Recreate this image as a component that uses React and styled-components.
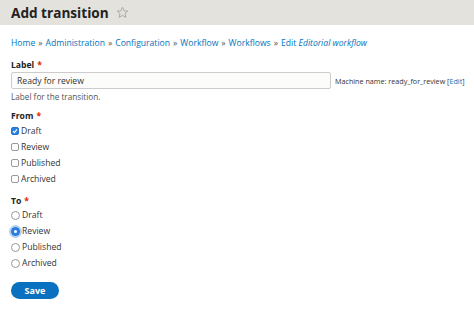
import * as React from 'react';
import styled, { createGlobalStyle } from 'styled-components';

const Global = createGlobalStyle`
  html, body { margin: 0; padding: 0; background: #fff; }
  body { font-family: "Open Sans", "DejaVu Sans", sans-serif; color: #333; }
`;

const Header = styled.div`
  height: 25px;
  background: #e3e2dc;
  display: flex;
  align-items: center;
  padding: 0 11px;
  gap: 7px;
`;

const Title = styled.h1`
  margin: 0;
  font-size: 13.6px;
  line-height: 16px;
  font-weight: 700;
  color: #222;
`;

const Star = styled.svg`
  width: 13px;
  height: 13px;
`;

const Body = styled.div`
  padding: 12px 11px 0;
  font-size: 8.5px;
  line-height: 12px;
`;

const Breadcrumb = styled.div`
  color: #0074bd;
  font-size: 8.6px;
  margin-bottom: 10px;
  white-space: nowrap;
  em { font-style: italic; }
`;

const Sep = styled.span`
  color: #555;
  margin: 0 3px;
`;

const FieldLabel = styled.div`
  font-weight: 700;
  font-size: 8.6px;
  color: #222;
  margin-bottom: ${p => p.$gap || 1}px;
  span { color: #e32700; margin-left: 3px; }
`;

const InputRow = styled.div`
  display: flex;
  align-items: center;
  gap: 4px;
`;

const TextInput = styled.div`
  flex-shrink: 0;
  width: 308px;
  height: 15px;
  border: 1px solid #ccc;
  border-radius: 2px;
  background: #fcfcfa;
  display: flex;
  align-items: center;
  padding: 0 5px;
  font-size: 8.6px;
  color: #333;
`;

const Machine = styled.div`
  font-size: 7.2px;
  color: #333;
  white-space: nowrap;
  a { color: #0074bd; }
`;

const Desc = styled.div`
  font-size: 8.2px;
  color: #555;
  margin: 2px 0 7px;
`;

const Options = styled.div`
  display: flex;
  flex-direction: column;
  gap: 4px;
  margin-bottom: ${p => p.$mb || 0}px;
`;

const Option = styled.div`
  display: flex;
  align-items: center;
  gap: 2px;
  height: 12px;
  font-size: 8.6px;
  color: #333;
`;

const Box = styled.span`
  width: ${p => (p.$round ? 9 : 8)}px;
  height: ${p => (p.$round ? 9 : 8)}px;
  border: 1px solid ${p => (p.$on ? '#1f77d3' : '#999')};
  background: ${p => (p.$on ? '#2b80e0' : '#fff')};
  border-radius: ${p => (p.$round ? '50%' : '2px')};
  box-sizing: border-box;
  display: flex;
  align-items: center;
  justify-content: center;
  box-shadow: ${p => (p.$glow ? '0 0 0 2px rgba(90,150,230,0.45)' : 'none')};
`;

const Dot = styled.span`
  width: 3px;
  height: 3px;
  border-radius: 50%;
  background: #fff;
`;

const SaveButton = styled.button`
  width: 48px;
  height: 17px;
  border: none;
  border-radius: 9px;
  background: #0a70c0;
  color: #fff;
  font-family: inherit;
  font-weight: 700;
  font-size: 9px;
  padding: 0;
`;

const Check = () => (
  <svg width="6" height="6" viewBox="0 0 6 6">
    <path d="M1 3.2 L2.4 4.6 L5 1.4" fill="none" stroke="#fff" strokeWidth="1.1" />
  </svg>
);

const states = ['Draft', 'Review', 'Published', 'Archived'];

export default function App() {
  return (
    <>
      <Global />
      <Header>
        <Title>Add transition</Title>
        <Star viewBox="0 0 24 24">
          <path
            d="M12 2.5l2.9 6.3 6.9.7-5.2 4.6 1.5 6.8L12 17.4l-6.1 3.5 1.5-6.8-5.2-4.6 6.9-.7z"
            fill="none"
            stroke="#999"
            strokeWidth="1.4"
            strokeLinejoin="round"
          />
        </Star>
      </Header>
      <Body>
        <Breadcrumb>
          Home<Sep>»</Sep>Administration<Sep>»</Sep>Configuration<Sep>»</Sep>Workflow<Sep>»</Sep>Workflows<Sep>»</Sep>Edit <em>Editorial workflow</em>
        </Breadcrumb>
        <FieldLabel>Label<span>*</span></FieldLabel>
        <InputRow>
          <TextInput>Ready for review</TextInput>
          <Machine>Machine name: ready_for_review [<a>Edit</a>]</Machine>
        </InputRow>
        <Desc>Label for the transition.</Desc>
        <FieldLabel $gap={3}>From<span>*</span></FieldLabel>
        <Options $mb={10}>
          {states.map((s, i) => (
            <Option key={s}>
              <Box $on={i === 0}>{i === 0 && <Check />}</Box>
              {s}
            </Option>
          ))}
        </Options>
        <FieldLabel $gap={2}>To<span>*</span></FieldLabel>
        <Options $mb={13}>
          {states.map((s, i) => (
            <Option key={s}>
              <Box $round $on={i === 1} $glow={i === 1}>{i === 1 && <Dot />}</Box>
              {s}
            </Option>
          ))}
        </Options>
        <SaveButton>Save</SaveButton>
      </Body>
    </>
  );
}
